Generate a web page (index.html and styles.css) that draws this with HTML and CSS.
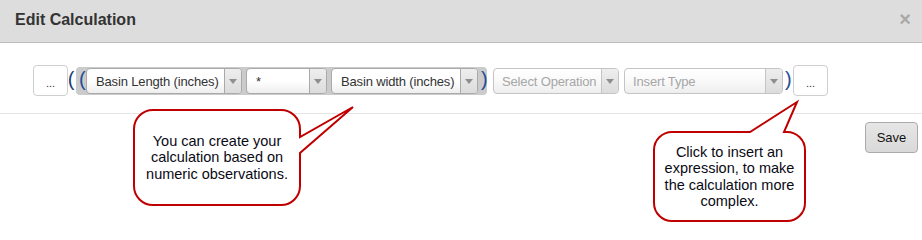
FILE: index.html
```html
<!DOCTYPE html>
<html>
<head>
<meta charset="utf-8">
<link rel="stylesheet" href="styles.css">
</head>
<body>
<div class="modal">
  <div class="modal-header">
    <h3 class="title">Edit Calculation</h3>
    <span class="close">×</span>
  </div>
  <div class="modal-body">
    <div class="expr-row">
      <button class="btn-dots">...</button>
      <span class="paren">(</span>
      <div class="group">
        <span class="paren">(</span>
        <div class="select w-len"><span class="sel-text">Basin Length (inches)</span><span class="sel-arrow"><span class="tri"></span></span></div>
        <div class="select w-op"><span class="sel-text">*</span><span class="sel-arrow"><span class="tri"></span></span></div>
        <div class="select w-wid"><span class="sel-text">Basin width (inches)</span><span class="sel-arrow"><span class="tri"></span></span></div>
        <span class="paren">)</span>
      </div>
      <div class="select disabled w-selop"><span class="sel-text">Select Operation</span><span class="sel-arrow"><span class="tri"></span></span></div>
      <div class="select disabled w-type"><span class="sel-text">Insert Type</span><span class="sel-arrow"><span class="tri"></span></span></div>
      <span class="paren">)</span>
      <button class="btn-dots">...</button>
    </div>
  </div>
  <div class="modal-footer">
    <button class="btn-save">Save</button>
  </div>
</div>

<div class="callout callout-1">
  <svg class="callout-shape" width="168" height="97" viewBox="0 0 168 97">
    <path d="M20 1 H148 A19 19 0 0 1 167 20 V28 L220 -2 L167 44 V77 A19 19 0 0 1 148 96 H20 A19 19 0 0 1 1 77 V20 A19 19 0 0 1 20 1 Z"/>
  </svg>
  <div class="callout-text">You can create your<br>calculation based on<br>numeric observations.</div>
</div>

<div class="callout callout-2">
  <svg class="callout-shape" width="153" height="91" viewBox="0 0 153 91">
    <path d="M19 1 H97 L144 -29 L131 1 H134 A18 18 0 0 1 152 19 V72 A18 18 0 0 1 134 90 H19 A18 18 0 0 1 1 72 V19 A18 18 0 0 1 19 1 Z"/>
  </svg>
  <div class="callout-text">Click to insert an<br>expression, to make<br>the calculation more<br>complex.</div>
</div>
</body>
</html>
```
FILE: styles.css
```css
html, body {
  margin: 0;
  padding: 0;
  background: #fff;
  font-family: "Liberation Sans", Arial, sans-serif;
  width: 922px;
  height: 229px;
  overflow: hidden;
  position: relative;
}

.modal-header {
  height: 42px;
  background: #dddddd;
  border-bottom: 1px solid #bdbdbd;
  display: flex;
  align-items: center;
  justify-content: space-between;
  padding: 0 11px 0 15px;
}

.title {
  margin: 0;
  font-size: 16px;
  font-weight: bold;
  color: #333;
  padding-bottom: 2px;
}

.close {
  font-size: 20px;
  font-weight: bold;
  color: #a9a9a9;
  line-height: 1;
  padding-bottom: 5px;
}

.modal-body {
  padding: 22px 0 0 33px;
  height: 48px;
  border-bottom: 1px solid #e5e5e5;
}

.expr-row {
  display: flex;
  align-items: center;
  height: 31px;
}

.btn-dots {
  width: 35px;
  height: 31px;
  border: 1px solid #cfcfcf;
  border-radius: 4px;
  background: #fff;
  font-family: "Liberation Sans", Arial, sans-serif;
  font-size: 11px;
  color: #333;
  padding: 5px 0 0 0;
  margin: 0;
}

.paren {
  font-family: "Liberation Sans", Arial, sans-serif;
  font-size: 20px;
  color: #1f3f75;
  line-height: 1;
  width: 8px;
  text-align: center;
  padding-bottom: 3px;
}

.expr-row > .paren:first-of-type {
  margin-left: -1px;
}

.group {
  display: flex;
  align-items: center;
  gap: 4px;
  background: #cbcbcb;
  border-radius: 4px;
  height: 28px;
  padding: 0 3px 0 3px;
  margin-left: 1px;
  margin-right: 6px;
}

.group > .paren {
  color: #1f4f95;
  width: 6px;
  margin-right: -3px;
}

.group > .paren:last-child {
  margin-left: -1px;
}

.select {
  display: flex;
  align-items: stretch;
  height: 26px;
  box-sizing: border-box;
  border: 1px solid #aaaaaa;
  border-radius: 4px;
  background: linear-gradient(#ffffff 0%, #ffffff 50%, #eeeeee 100%);
  overflow: hidden;
}

.sel-text {
  flex: 1;
  font-size: 13px;
  letter-spacing: -0.15px;
  color: #333;
  padding-left: 9px;
  line-height: 25px;
  white-space: nowrap;
}

.sel-arrow {
  width: 16px;
  border-left: 1px solid #aaaaaa;
  background: linear-gradient(#eeeeee, #dcdcdc);
  display: flex;
  align-items: center;
  justify-content: center;
}

.tri {
  width: 0;
  height: 0;
  border-left: 4px solid transparent;
  border-right: 4px solid transparent;
  border-top: 5px solid #8f8f8f;
  margin-top: 2px;
}

.select.disabled {
  border-color: #c4c4c4;
  background: linear-gradient(#ffffff 0%, #f9f9f9 50%, #eeeeee 100%);
}

.select.disabled .sel-text {
  color: #a6a6a6;
  padding-left: 8px;
}

.select.disabled .sel-arrow {
  border-left-color: #c4c4c4;
}

.w-len { width: 156px; }
.w-op { width: 81px; }
.w-wid { width: 147px; }
.w-selop { width: 126px; margin-right: 5px; }
.w-type { width: 159px; margin-right: 2px; }

.expr-row > .paren:last-of-type {
  margin-right: 2px;
  color: #1f4f95;
  width: 6px;
}

.modal-footer {
  display: flex;
  justify-content: flex-end;
  padding: 8px 4px 0 0;
}

.btn-save {
  width: 53px;
  height: 31px;
  margin: 0;
  border: 1px solid #aaaaaa;
  border-radius: 4px;
  background: linear-gradient(#e6e6e6, #d9d9d9);
  font-family: "Liberation Sans", Arial, sans-serif;
  font-size: 13px;
  color: #111;
  padding: 0;
}

.callout {
  position: absolute;
  display: flex;
  align-items: center;
  justify-content: center;
}

.callout-1 {
  left: 133px;
  top: 109px;
  width: 168px;
  height: 97px;
}

.callout-2 {
  left: 653px;
  top: 131px;
  width: 153px;
  height: 91px;
}

.callout-shape {
  position: absolute;
  left: 0;
  top: 0;
  overflow: visible;
}

.callout-shape path {
  fill: #ffffff;
  stroke: #c00000;
  stroke-width: 2;
  stroke-linejoin: miter;
}

.callout-text {
  position: relative;
  font-family: "Liberation Sans", Arial, sans-serif;
  font-size: 14.5px;
  line-height: 16.5px;
  color: #0a0a14;
  text-align: center;
}
```
